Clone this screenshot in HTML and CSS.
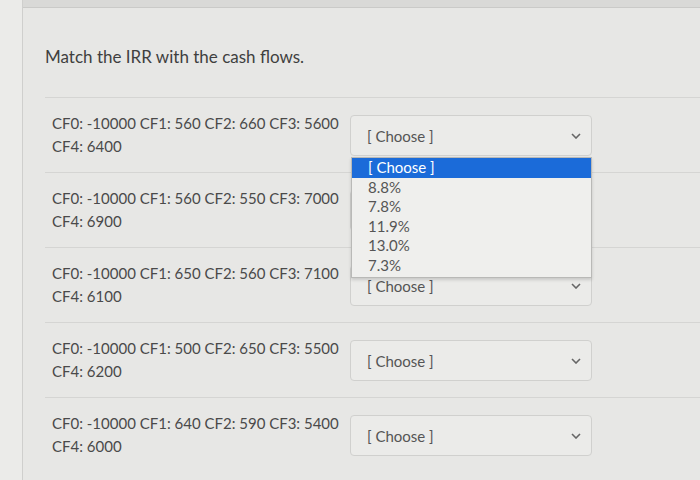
FILE: index.html
```html
<!DOCTYPE html>
<html lang="en">
<head>
    <meta charset="UTF-8">
    <meta name="viewport" content="width=device-width, initial-scale=1.0">
    <title>Match the IRR</title>
    <link rel="stylesheet" href="styles.css">
</head>
<body>
    <div class="quiz">
        <div class="quiz-top"></div>
        <div class="question">
            <p class="prompt">Match the IRR with the cash flows.</p>

            <ul class="answers">
                <li class="answer">
                    <div class="flows">CF0: -10000 CF1: 560 CF2: 660 CF3: 5600 CF4: 6400</div>
                    <div class="select open">
                        <span>[ Choose ]</span>
                        <svg class="chevron" width="10" height="6" viewBox="0 0 10 6"><path d="M1 1l4 4 4-4" fill="none" stroke="#666" stroke-width="1.6"/></svg>
                        <ul class="options">
                            <li class="active">[ Choose ]</li>
                            <li>8.8%</li>
                            <li>7.8%</li>
                            <li>11.9%</li>
                            <li>13.0%</li>
                            <li>7.3%</li>
                        </ul>
                    </div>
                </li>
                <li class="answer">
                    <div class="flows">CF0: -10000 CF1: 560 CF2: 550 CF3: 7000 CF4: 6900</div>
                    <!-- covered by the open list above -->
                    <div class="select">
                        <svg class="chevron" width="10" height="6" viewBox="0 0 10 6"><path d="M1 1l4 4 4-4" fill="none" stroke="#666" stroke-width="1.6"/></svg>
                    </div>
                </li>
                <li class="answer">
                    <div class="flows">CF0: -10000 CF1: 650 CF2: 560 CF3: 7100 CF4: 6100</div>
                    <div class="select">
                        <span>[ Choose ]</span>
                        <svg class="chevron" width="10" height="6" viewBox="0 0 10 6"><path d="M1 1l4 4 4-4" fill="none" stroke="#666" stroke-width="1.6"/></svg>
                    </div>
                </li>
                <li class="answer">
                    <div class="flows">CF0: -10000 CF1: 500 CF2: 650 CF3: 5500 CF4: 6200</div>
                    <div class="select">
                        <span>[ Choose ]</span>
                        <svg class="chevron" width="10" height="6" viewBox="0 0 10 6"><path d="M1 1l4 4 4-4" fill="none" stroke="#666" stroke-width="1.6"/></svg>
                    </div>
                </li>
                <li class="answer">
                    <div class="flows">CF0: -10000 CF1: 640 CF2: 590 CF3: 5400 CF4: 6000</div>
                    <div class="select">
                        <span>[ Choose ]</span>
                        <svg class="chevron" width="10" height="6" viewBox="0 0 10 6"><path d="M1 1l4 4 4-4" fill="none" stroke="#666" stroke-width="1.6"/></svg>
                    </div>
                </li>
            </ul>
        </div>
    </div>
</body>
</html>
```

FILE: styles.css
```css
body {
    margin: 0;
    font-family: Lato, "Open Sans", sans-serif;
    background: #ebebe9;
    color: #4a4a4a;
}
.quiz {
    margin-left: 22px;
    border-left: 1px solid #cfcfcd;
    background: #e7e7e5;
    height: 480px;
}
.quiz-top {
    height: 7px;
    background: #d9d9d7;
    border-bottom: 1px solid #cacac8;
}
.question {
    padding-left: 22px;
}
.prompt {
    margin: 0;
    padding-top: 38px;
    height: 51px;
    font-size: 17px;
    color: #3f3f3f;
}
.answers {
    list-style: none;
    margin: 0;
    padding: 0;
}
.answer {
    display: flex;
    align-items: flex-start;
    height: 75px;
    box-sizing: border-box;
    padding: 14px 0 0 7px;
    border-top: 1px solid #d5d5d3;
}
.flows {
    width: 292px;
    font-size: 15px;
    line-height: 23px;
}
.select {
    position: relative;
    display: flex;
    align-items: center;
    justify-content: space-between;
    box-sizing: border-box;
    width: 242px;
    height: 41px;
    margin: 3px 0 0 6px;
    padding: 0 10px 0 16px;
    background: #ebebe9;
    border: 1px solid #d0d0ce;
    border-radius: 4px;
    font-size: 15px;
    color: #555;
}
.chevron {
    margin-left: auto;
}
.options {
    position: absolute;
    top: 41px;
    left: 0;
    z-index: 2;
    width: 241px;
    box-sizing: border-box;
    margin: 0;
    padding: 0 0 2px;
    list-style: none;
    background: #efefed;
    border: 1px solid #b9b9b7;
    box-shadow: 0 2px 3px rgba(0, 0, 0, 0.15);
}
.options li {
    height: 19.5px;
    line-height: 19.5px;
    padding-left: 16px;
    color: #555;
}
.options li.active {
    background: #1b6bd9;
    color: #fff;
}
```
